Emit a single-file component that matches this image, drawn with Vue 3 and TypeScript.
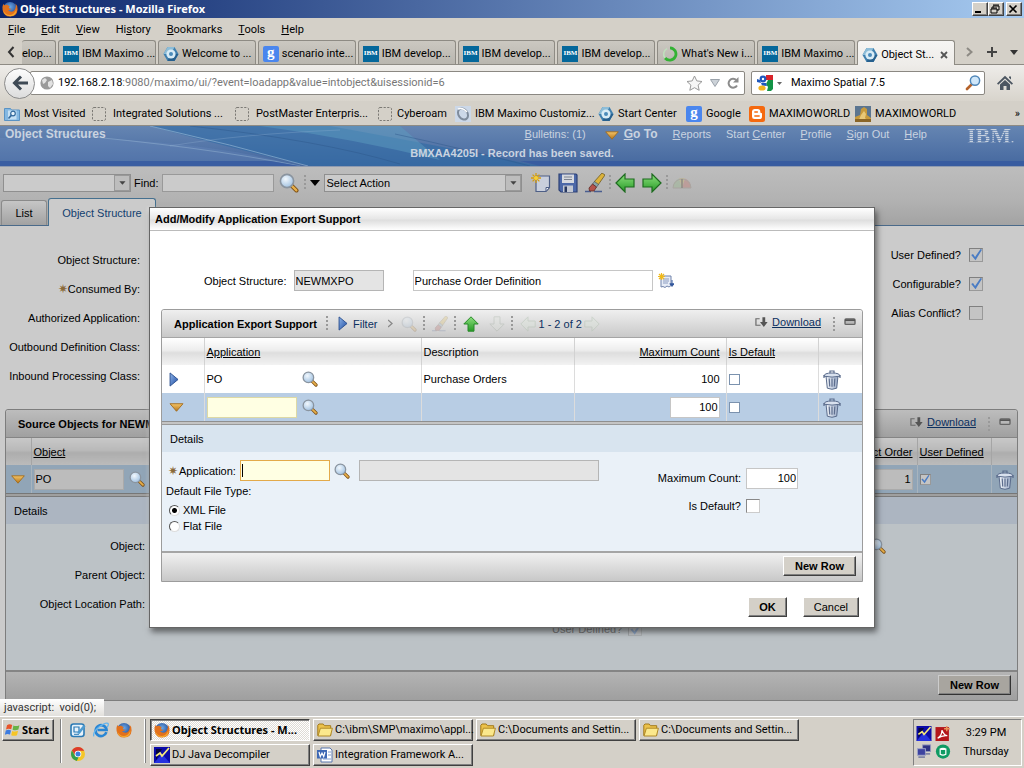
<script setup lang="ts">
import { ref } from 'vue'

interface Tab { icon: string; text: string }
interface Mark { icon: string; text: string }
interface Task { icon: string; text: string; active?: boolean }
interface Row { id: number; app: string; desc: string; open: boolean }

const menus = ['File', 'Edit', 'View', 'History', 'Bookmarks', 'Tools', 'Help']
const menuKey: Record<string, number> = { History: 2 }
const glyphs: Record<string, string> = { ibm: 'IBM', goog: 'g' }

const tabs: Tab[] = [
  { icon: 'ibm', text: 'IBM Maximo ...' },
  { icon: 'hex', text: 'Welcome to ...' },
  { icon: 'goog', text: 'scenario inte...' },
  { icon: 'ibm', text: 'IBM develop...' },
  { icon: 'ibm', text: 'IBM develop...' },
  { icon: 'ibm', text: 'IBM develop...' },
  { icon: 'ring', text: "What's New i..." },
  { icon: 'ibm', text: 'IBM Maximo ...' },
]

const marks: Mark[] = [
  { icon: 'visited', text: 'Most Visited' },
  { icon: 'blank', text: 'Integrated Solutions ...' },
  { icon: 'blank', text: 'PostMaster Enterpris...' },
  { icon: 'blank', text: 'Cyberoam' },
  { icon: 'swirl', text: 'IBM Maximo Customiz...' },
  { icon: 'hex', text: 'Start Center' },
  { icon: 'goog', text: 'Google' },
  { icon: 'blogger', text: 'MAXIMOWORLD' },
  { icon: 'sphinx', text: 'MAXIMOWORLD' },
]

const tasks: Task[] = [
  { icon: 'firefox', text: 'Object Structures - M...', active: true },
  { icon: 'folder', text: 'C:\\ibm\\SMP\\maximo\\appl...' },
  { icon: 'folder', text: 'C:\\Documents and Settin...' },
  { icon: 'folder', text: 'C:\\Documents and Settin...' },
  { icon: 'dj', text: 'DJ Java Decompiler' },
  { icon: 'word', text: 'Integration Framework A...' },
]

const formLabels = ['Object Structure:', 'Consumed By:', 'Authorized Application:', 'Outbound Definition Class:', 'Inbound Processing Class:']
const flags = [
  { text: 'User Defined?', on: true },
  { text: 'Configurable?', on: true },
  { text: 'Alias Conflict?', on: false },
]

const rows: Row[] = [
  { id: 1, app: 'PO', desc: 'Purchase Orders', open: false },
  { id: 2, app: '', desc: '', open: true },
]

const query = ref('Maximo Spatial 7.5')
const fileType = ref('xml')
</script>

<template>
  <div class="screen">
    <svg class="defs" width="0" height="0" aria-hidden="true">
      <defs>
        <linearGradient id="gBlue" x1="0" y1="0" x2="1" y2="1"><stop offset="0" stop-color="#8fb6ea" /><stop offset="1" stop-color="#1c4aa0" /></linearGradient>
        <linearGradient id="gGold" x1="0" y1="0" x2="0" y2="1"><stop offset="0" stop-color="#f5c568" /><stop offset="1" stop-color="#b4741a" /></linearGradient>
        <linearGradient id="gGreen" x1="0" y1="0" x2="0" y2="1"><stop offset="0" stop-color="#8ee07e" /><stop offset="1" stop-color="#259a25" /></linearGradient>
        <linearGradient id="gBin" x1="0" y1="0" x2="1" y2="0"><stop offset="0" stop-color="#f4f7fb" /><stop offset="1" stop-color="#9aaac6" /></linearGradient>
        <radialGradient id="gFox" cx="0.5" cy="0.35" r="0.65"><stop offset="0" stop-color="#6aa7e6" /><stop offset="1" stop-color="#163a86" /></radialGradient>
        <radialGradient id="gLens" cx="0.4" cy="0.35" r="0.7"><stop offset="0" stop-color="#f2f8fd" /><stop offset="1" stop-color="#9dbfe0" /></radialGradient>
      </defs>
      <symbol id="firefox" viewBox="0 0 16 16">
        <circle cx="8" cy="8" r="7" fill="url(#gFox)" />
        <path d="M1.2 3 Q0 6 .6 9 Q1.8 15.6 8.2 15.6 Q15 15.2 15.6 8.4 Q15.8 4.6 13.4 2.6 Q14.6 5.4 13.2 7.8 Q12 11.2 8.4 10.6 Q6.4 10.4 6.2 9 Q8 9.4 9.4 7.8 Q7.2 8 6.6 6.6 Q7.6 6 7.6 5 Q6 4.8 5.2 3.8 Q3 3.4 2.6 4.4Z" fill="#e2711d" />
        <path d="M1.2 9 Q3 14 8 14 Q13 13.6 14.4 8 Q15 15 8.2 15.3 Q2 15 1.2 9Z" fill="#f6a92c" />
      </symbol>
      <symbol id="hex" viewBox="0 0 16 16">
        <path d="M4.5 1h7L15.5 8l-4 7h-7L.5 8Z" fill="#3f7fae" />
        <path d="M4.5 1h7L8 8 .5 8Z" fill="#8dbdd8" />
        <path d="M4.5 15h7L15.5 8 8 8Z" fill="#27608e" />
        <circle cx="8" cy="8" r="4.6" fill="#d9ecf6" /><circle cx="8" cy="8" r="2" fill="#4c8cba" />
      </symbol>
      <symbol id="ring" viewBox="0 0 16 16">
        <path d="M8 1.8A6.2 6.2 0 1 1 3 12" fill="none" stroke="#33b234" stroke-width="2.8" />
        <path d="M3 12A6.2 6.2 0 0 1 5 2.6" fill="none" stroke="#bfe0bd" stroke-width="1.6" />
      </symbol>
      <symbol id="visited" viewBox="0 0 16 16">
        <path d="M.5 2.5h6l1 1.5h8v10.5H.5Z" fill="#84b8e2" stroke="#5a93c4" />
        <rect x="4" y="4.5" width="8.5" height="9" fill="#c5e0f4" />
        <circle cx="9" cy="7.5" r="2.3" fill="#e8f4fc" stroke="#33699c" stroke-width="1.2" /><path d="M7.3 9.4 4.5 12.5" stroke="#33699c" stroke-width="1.6" />
      </symbol>
      <symbol id="blank" viewBox="0 0 16 16">
        <rect x="1.5" y="1.5" width="13" height="13" rx="1.5" fill="none" stroke="#7c7a75" stroke-dasharray="2.2 1.4" />
      </symbol>
      <symbol id="swirl" viewBox="0 0 16 16">
        <rect width="16" height="16" fill="#ccd8e8" />
        <ellipse cx="8" cy="8" rx="4.5" ry="6" fill="none" stroke="#7f8c9c" stroke-width="2" transform="rotate(-35 8 8)" />
        <path d="M3 3Q8 1 12 6" stroke="#fff" stroke-width="1.4" fill="none" />
      </symbol>
      <symbol id="blogger" viewBox="0 0 16 16">
        <rect width="16" height="16" rx="2.5" fill="#f5690f" />
        <path d="M5.5 3h3.2A2.6 2.6 0 0 1 11.3 5.6V6.6Q11.5 7 12.3 7T13 7.8V10.4A2.6 2.6 0 0 1 10.4 13H5.5A2.6 2.6 0 0 1 3 10.4V5.6A2.6 2.6 0 0 1 5.5 3Z" fill="#fff" />
        <path d="M5.8 6h2.6M5.8 10h4.4" stroke="#f5690f" stroke-width="1.3" stroke-linecap="round" />
      </symbol>
      <symbol id="sphinx" viewBox="0 0 16 16">
        <rect width="16" height="16" fill="#5b7590" /><path d="M0 16V11l5-2 1-6 3-2 3 2v6l4 3v4Z" fill="#c79a3c" /><path d="M6 9l3-4 2 3-1 4 4 4H3Z" fill="#e8c878" /><path d="M0 13h16v3H0Z" fill="#8a6527" />
      </symbol>
      <symbol id="gsearch" viewBox="0 0 16 16">
        <rect width="16" height="16" fill="#fff" />
        <path d="M9 0h7v5H9Z" fill="#d8232a" /><path d="M9 5h7v9l-2 2H9Z" fill="#139346" />
        <path d="M8 5h3L9 9l2 3-1 4H7Z" fill="#fff" />
        <circle cx="6" cy="4" r="3.4" fill="#1f58bd" /><circle cx="6" cy="4" r="1.2" fill="#fff" />
        <path d="M0 4l3 1 1 3-4-1ZM4 8h5l1 3-5-.5Z" fill="#1f58bd" /><ellipse cx="5" cy="13" rx="3.6" ry="2.6" fill="#f3b51f" />
      </symbol>
      <symbol id="lens" viewBox="0 0 20 20">
        <path d="M12 12l5.5 5.5" stroke="#7c4f16" stroke-width="4" stroke-linecap="round" /><path d="M12.6 12.6l4.8 4.8" stroke="#e8b04a" stroke-width="2.2" stroke-linecap="round" />
        <circle cx="8" cy="8" r="6.6" fill="url(#gLens)" stroke="#8a949f" stroke-width="1.6" />
      </symbol>
      <symbol id="binoc" viewBox="0 0 20 20">
        <path d="M8 12 2.5 17.5" stroke="#b5622a" stroke-width="3.4" stroke-linecap="round" />
        <circle cx="12.5" cy="7" r="5.8" fill="#cfe7fa" stroke="#4f86b8" stroke-width="1.8" />
      </symbol>
      <symbol id="down" viewBox="0 0 16 10"><path d="M.8.8h14.4L8 9.2Z" fill="url(#gGold)" stroke="#a16a1b" /></symbol>
      <symbol id="play" viewBox="0 0 10 16"><path d="M.8 1v14L9.3 8Z" fill="url(#gBlue)" stroke="#2a4f8f" /></symbol>
      <symbol id="arrow" viewBox="0 0 20 20"><path d="M1 10 10 1v5h9v8h-9v5Z" fill="url(#gGreen)" stroke="#1d6b1f" stroke-width="1.2" /></symbol>
      <symbol id="arrowUp" viewBox="0 0 16 16"><path d="M8 .8 15.2 8H11v7.2H5V8H.8Z" fill="url(#gGreen)" stroke="#2a8a2c" /></symbol>
      <symbol id="arrowDown" viewBox="0 0 16 16"><path d="M8 15.2.8 8H5V.8h6V8h4.2Z" fill="#dfe6dd" stroke="#7f907d" /></symbol>
      <symbol id="arrowPale" viewBox="0 0 16 16"><path d="M.8 8 8 .8V5h7.2v6H8v4.2Z" fill="#dbe4da" stroke="#a9bba8" /></symbol>
      <symbol id="newDoc" viewBox="0 0 20 20">
        <path d="M5 3h13.5v11.5L15 18.5H5Z" fill="#c9cfdc" stroke="#4e5f86" stroke-width="1.2" /><path d="M18.5 14.5H15v4Z" fill="#f3f5fa" stroke="#4e5f86" />
        <path d="M5 0v10M0 5h10M1.6 1.6l6.8 6.8M8.4 1.6 1.6 8.4" stroke="#d69c10" stroke-width="1.3" /><circle cx="5" cy="5" r="2" fill="#f4cf3a" />
      </symbol>
      <symbol id="save" viewBox="0 0 20 20">
        <path d="M1 1h17l1 1v17H3L1 17Z" fill="#4c68a8" stroke="#2d4176" stroke-width="1.2" /><path d="M4 1.5h12V10H4Z" fill="#d6d9df" /><path d="M6 4h8M6 6.5h8" stroke="#7b8290" />
        <path d="M5 12.5h10V19H5Z" fill="#c3c8d2" /><path d="M6.5 13.5H9V19H6.5Z" fill="#27375f" />
      </symbol>
      <symbol id="eraser" viewBox="0 0 20 20">
        <path d="M0 18.5h6M9 18.5h8" stroke="#4a5e90" stroke-width="1.4" /><path d="M17 0l3 2-7 10-4-3Z" fill="#dcb33b" stroke="#6f5a22" stroke-width=".8" /><path d="M9.5 8.5l4 3-2 2.6-4-3Z" fill="#8ba3a8" stroke="#4d5a5c" stroke-width=".7" />
        <path d="M7.500 11l4 3-2.500 4H4.500L4 15Z" fill="#b5524a" stroke="#5e2b27" stroke-width=".8" />
      </symbol>
      <symbol id="gauge" viewBox="0 0 20 14">
        <path d="M1 12A9 9 0 0 1 7 2.5L10 12Z" fill="#a3b89c" /><path d="M7 2.5A9 9 0 0 1 13 2.5L10 12Z" fill="#c4b77f" /><path d="M13 2.5A9 9 0 0 1 19 12h-9Z" fill="#c08d87" /><path d="M1 12A9 9 0 0 1 19 12Z" fill="none" stroke="#a09a92" /><path d="M10 12V3" stroke="#6d6760" stroke-width="1.4" />
      </symbol>
      <symbol id="bin" viewBox="0 0 18 20">
        <path d="M3 6h12l-1.3 12.2Q9 20.4 4.3 18.2Z" fill="url(#gBin)" stroke="#5b6c8c" /><path d="M6.2 8.5l.5 8M9 8.5v8.3M11.8 8.5l-.5 8" stroke="#5d6d8d" stroke-width="1.2" />
        <path d="M1 6.2Q1 3 9 3t8 3.2Q9 8 1 6.2Z" fill="#d9e1ee" stroke="#5b6c8c" /><path d="M7 3V1h4v2M1 5v3M17 5v3" stroke="#5b6c8c" stroke-width="1.2" fill="none" />
      </symbol>
      <symbol id="dl" viewBox="0 0 14 12">
        <path d="M5 2.5H1v7h5M1 2.5V9.5" fill="none" stroke="#6a6a6a" stroke-width="1.3" /><path d="M8 1h3v5h2.600L9.500 11.400 5.400 6H8Z" fill="#555" />
      </symbol>
      <symbol id="mini" viewBox="0 0 12 8"><rect x="1" y="1" width="10" height="5.4" rx="1" fill="#b8b8b8" stroke="#666" stroke-width="1.4" /><path d="M1 2.2h10" stroke="#555" stroke-width="1.6" /></symbol>
      <symbol id="longDesc" viewBox="0 0 16 16">
        <path d="M3 3h10v9.5L11 14l-2-1-2 1.5-2-1-2 .5Z" fill="#e7ecf6" stroke="#7183ab" /><path d="M5 6h6M5 8h6M5 10h5" stroke="#8b9cc0" /><path d="M14 7v5M11.800 10.800 14 13.400l2-2.600Z" fill="#35599d" stroke="#35599d" />
        <path d="M3.5 0v7M0 3.5h7M1 1l5 5M6 1 1 6" stroke="#f0b91c" stroke-width="1.2" />
      </symbol>
      <symbol id="folder" viewBox="0 0 16 14"><path d="M.8 12.5V2.2L2 1h4.2l1.3 1.7h6.2v9.8Z" fill="#ecc24a" stroke="#a37a1a" /><path d="M1 13 3.4 5.2h12L13.4 13Z" fill="#fbe88c" stroke="#b08a28" /></symbol>
      <symbol id="dj" viewBox="0 0 16 16"><rect width="16" height="16" fill="#0b0ba8" /><path d="M0 16 8 7l8 9Z" fill="#2531e0" /><path d="M2 2h6L2 13Z" fill="#050540" /><path d="M2 9l4-3 2 3 7-8" fill="none" stroke="#f6e97a" stroke-width="1.8" /></symbol>
      <symbol id="word" viewBox="0 0 16 16"><path d="M4 1h9l2 2v12H4Z" fill="#fff" stroke="#5877ad" /><path d="M11 5h3M11 8h3M6 12h8" stroke="#7e9bd0" /><rect y="3" width="10" height="8.5" fill="#3d68b4" /><path d="M2 5l1.3 4.5L5 6l1.7 3.5L8 5" fill="none" stroke="#fff" stroke-width="1.2" /></symbol>
      <symbol id="desk" viewBox="0 0 16 16"><rect x="1" y="2" width="13" height="12.5" rx="2.5" fill="#e8f3fb" stroke="#2b7ab5" stroke-width="1.6" /><path d="M4 5h5v5H4Z" fill="none" stroke="#2b7ab5" stroke-width="1.2" /><path d="M7 11l6.5-8 2 1.5L9.5 12Z" fill="#4d9bd0" /><path d="M4 12.3h5" stroke="#2b7ab5" /></symbol>
      <symbol id="ie" viewBox="0 0 16 16"><path d="M13.4 10.2A5.5 5.5 0 1 1 13.6 8H4.5" fill="none" stroke="#2a86d4" stroke-width="2.6" /><path d="M.8 14.4Q-.4 10 6 5T15 1.4Q16 3 14 5.4" fill="none" stroke="#65b5ee" stroke-width="1.3" /></symbol>
      <symbol id="chrome" viewBox="0 0 16 16"><circle cx="8" cy="8" r="7" fill="#f4c62a" /><path d="M8 1A7 7 0 0 1 14.2 4.8H8L5 9 1.9 4.6A7 7 0 0 1 8 1Z" fill="#dc3b2c" /><path d="M1.9 4.6 5.2 10 8.6 11.2 6.8 14.9A7 7 0 0 1 1.9 4.6Z" fill="#35a04a" /><circle cx="8" cy="8" r="3.3" fill="#fff" /><circle cx="8" cy="8" r="2.5" fill="#3d7fdc" /></symbol>
      <symbol id="win" viewBox="0 0 16 16"><path d="M2 3.2Q4.4 1.6 7.2 3L6.2 7.2Q3.6 6 1 7.4Z" fill="#e8542a" /><path d="M8.4 3.5Q11 4.8 14.4 3.2L13.4 7.6Q10.6 9 7.6 7.7Z" fill="#67b346" /><path d="M.8 8.6Q3.2 7.2 6 8.4L5 12.6Q2.4 11.4-.2 12.8Z" fill="#3d7ce0" /><path d="M7.2 9Q10 10.2 13 8.8L12 13.2Q9 14.4 6.2 13.2Z" fill="#f6c526" /></symbol>
      <symbol id="pdf" viewBox="0 0 14 14"><rect y="1" width="12.5" height="13" fill="#b3161b" /><path d="M2 11.5Q6 9 6 4q2 5 5 5-5-.5-9 2.5Z" fill="none" stroke="#fff" stroke-width="1.2" /><path d="M10.5 0v5M8 2.5h5.5" stroke="#e9965c" stroke-width="1.4" /></symbol>
      <symbol id="net" viewBox="0 0 16 16"><rect x="6.5" y="1" width="8.5" height="7" fill="#2f3484" stroke="#9298bd" /><rect x="1" y="5" width="8.5" height="7" fill="#3d43a0" stroke="#a1a6c8" /><path d="M2 14h7M9.5 10.5h5" stroke="#8085a5" stroke-width="2" /></symbol>
      <symbol id="db" viewBox="0 0 16 16"><circle cx="8" cy="8" r="7.6" fill="#0f9a63" /><path d="M5 5.4h6V11q-3 1.8-6 0Z" fill="none" stroke="#fff" stroke-width="1.3" /><ellipse cx="8" cy="5.2" rx="3" ry="1.2" fill="#fff" /></symbol>
    </svg>

    <header class="titlebar">
      <svg class="i16"><use href="#firefox" /></svg>
      <h1>Object Structures - Mozilla Firefox</h1>
      <button class="wb" aria-label="Minimize"><svg viewBox="0 0 12 10"><path d="M2 8h6" stroke="#000" stroke-width="2" /></svg></button>
      <button class="wb" aria-label="Restore"><svg viewBox="0 0 12 10"><path d="M4 1h6M4 2h6v4H8M4 2v2M2 4h6M2 5h6v4H2Z" fill="none" stroke="#000" /></svg></button>
      <button class="wb close" aria-label="Close"><svg viewBox="0 0 12 10"><path d="M2.500 1.500l7 7M9.500 1.500l-7 7" stroke="#000" stroke-width="1.700" /></svg></button>
    </header>

    <nav class="menubar">
      <a v-for="m in menus" :key="m" href="#">{{ m.slice(0, menuKey[m] ?? 0) }}<u>{{ m.charAt(menuKey[m] ?? 0) }}</u>{{ m.slice((menuKey[m] ?? 0) + 1) }}</a>
    </nav>

    <div class="tabstrip">
      <button class="scroll" aria-label="Scroll tabs left"><svg width="8" height="12" viewBox="0 0 8 12"><path d="M6.500 1 2 6l4.500 5" fill="none" stroke="#333" stroke-width="2" /></svg></button>
      <div class="tabs">
        <button class="tab cut">elop...</button>
        <button v-for="(t, i) in tabs" :key="i" class="tab"><span v-if="glyphs[t.icon]" class="glyph" :class="t.icon">{{ glyphs[t.icon] }}</span><svg v-else class="i16"><use :href="'#' + t.icon" /></svg><span>{{ t.text }}</span></button>
        <button class="tab on"><svg class="i16"><use href="#hex" /></svg><span>Object St...</span><svg class="x" width="8" height="8" viewBox="0 0 8 8"><path d="M1 1l6 6M7 1 1 7" stroke="#555" stroke-width="1.800" /></svg></button>
      </div>
      <div class="tabtools">
        <button aria-label="Scroll tabs right"><svg width="7" height="10" viewBox="0 0 7 10"><path d="M1 1l4.500 4L1 9" fill="none" stroke="#8d8a84" stroke-width="2" /></svg></button>
        <button aria-label="New tab"><svg width="10" height="10" viewBox="0 0 10 10"><path d="M5 0v10M0 5h10" stroke="#444" stroke-width="2" /></svg></button>
        <button aria-label="List tabs"><svg width="8" height="5" viewBox="0 0 8 5"><path d="M0 0h8L4 5Z" fill="#333" /></svg></button>
      </div>
    </div>

    <div class="navbar">
      <button class="back" aria-label="Back"><svg width="16" height="16" viewBox="0 0 16 16"><path d="M9 1.500 2.500 8 9 14.500M3 8h13" fill="none" stroke="#3f4a55" stroke-width="3" /></svg></button>
      <div class="url">
        <svg width="14" height="14" viewBox="0 0 14 14"><circle cx="7" cy="7" r="6.600" fill="#9a9a9a" /><path d="M2 4l3-2 2 2-2 3-2 1ZM8 6l4-2 1 4-3 4-2-2Z" fill="#e2e2e2" /></svg>
        <span class="addr"><b>192.168.2.18</b>:9080/maximo/ui/?event=loadapp&amp;value=intobject&amp;uisessionid=6</span>
        <svg width="17" height="16" viewBox="0 0 17 16"><path d="M8.500 1l2.300 4.900 5.200.6-3.900 3.600 1.100 5.200-4.700-2.600-4.700 2.600 1.100-5.200L1 6.500l5.200-.6Z" fill="#f6f6f6" stroke="#999" /></svg>
        <svg width="10" height="8" viewBox="0 0 10 8"><path d="M.5.500h9L5 7.500Z" fill="#ccd2d8" stroke="#9aa2aa" /></svg>
        <svg width="12" height="12" viewBox="0 0 12 12"><path d="M10 8.500A4.500 4.500 0 1 1 9.300 3" fill="none" stroke="#8c8c8c" stroke-width="2" /><path d="M11.500 0v5.500H6Z" fill="#8c8c8c" /></svg>
      </div>
      <div class="search">
        <svg class="i16"><use href="#gsearch" /></svg>
        <svg width="5" height="3" viewBox="0 0 5 3"><path d="M0 0h5L2.500 3Z" fill="#666" /></svg>
        <input v-model="query" aria-label="Search">
        <svg class="i16"><use href="#binoc" /></svg>
      </div>
      <button class="home" aria-label="Home"><svg width="16" height="16" viewBox="0 0 16 16"><path d="M8 .8 16 8.500l-1.200 1.300L8 3.600 1.200 9.800 0 8.500ZM12 1.500h2v3l-2-1.800Z" fill="#4c5661" /><path d="M3 9.500 8 5l5 4.500V15H9.500v-4h-3v4H3Z" fill="#4c5661" /></svg></button>
    </div>

    <nav class="bookmarks">
      <a v-for="(m, i) in marks" :key="i" href="#"><span v-if="glyphs[m.icon]" class="glyph" :class="m.icon">{{ glyphs[m.icon] }}</span><svg v-else class="i16"><use :href="'#' + m.icon" /></svg><span>{{ m.text }}</span></a>
      <button aria-label="More bookmarks">»</button>
    </nav>

    <main class="app">
      <header class="banner">
        <svg class="swoosh" viewBox="0 0 1024 40" preserveAspectRatio="none" aria-hidden="true">
          <path d="M150 0Q230 22 310 40H540Q440 20 330 0Z" fill="#2f6aa5" opacity=".6" />
          <path d="M260 0Q350 12 440 34L400 0Z" fill="#5c9cc0" opacity=".5" />
          <path d="M0 12Q180 8 300 40H0Z" fill="#6f8fc4" opacity=".25" />
          <path d="M150 0Q230 18 308 40" fill="none" stroke="#a4c3dd" opacity=".55" /><path d="M60 8Q200 20 300 40" fill="none" stroke="#a4c3dd" opacity=".4" />
          <path d="M190 0Q320 14 400 38M395 8Q460 22 530 40" fill="none" stroke="#2c5689" opacity=".45" /><path d="M170 20Q240 8 340 4" fill="none" stroke="#94b4d4" opacity=".3" />
          <path d="M0 35h270l30 5H0ZM520 35h504v5H540Z" fill="#3559a0" opacity=".8" />
        </svg>
        <div class="brow">
          <h2>Object Structures</h2>
          <a href="#"><u>B</u>ulletins: (1)</a>
          <a href="#" class="goto"><svg width="14" height="9"><use href="#down" /></svg><b><u>G</u>o To</b></a>
          <a href="#"><u>R</u>eports</a>
          <a href="#">Start <u>C</u>enter</a>
          <a href="#"><u>P</u>rofile</a>
          <a href="#"><u>S</u>ign Out</a>
          <a href="#"><u>H</u>elp</a>
          <span class="logo">IBM<i>.</i></span>
        </div>
        <p class="msg">BMXAA4205I - Record has been saved.</p>
      </header>

      <div class="tools">
        <span class="sel s1"><select aria-label="Saved queries"><option></option></select><svg viewBox="0 0 16 16"><path d="M5 6h7L8.500 10Z" fill="#444" /></svg></span>
        <label for="find">Find:</label>
        <input id="find">
        <button aria-label="Search" class="lg"><svg><use href="#lens" /></svg></button>
        <i class="dots"></i>
        <svg class="caret" width="10" height="6" viewBox="0 0 10 6"><path d="M0 0h10L5 6Z" fill="#000" /></svg>
        <span class="sel s2"><select aria-label="Select Action"><option>Select Action</option></select><svg viewBox="0 0 16 16"><path d="M5 6h7L8.500 10Z" fill="#444" /></svg></span>
        <div class="actions">
          <button aria-label="New"><svg><use href="#newDoc" /></svg></button>
          <button aria-label="Save"><svg><use href="#save" /></svg></button>
          <button aria-label="Clear"><svg><use href="#eraser" /></svg></button>
          <i class="dots"></i>
          <button aria-label="Previous"><svg><use href="#arrow" /></svg></button>
          <button aria-label="Next" class="flip"><svg><use href="#arrow" /></svg></button>
          <i class="dots"></i>
          <button aria-label="KPI" class="faded"><svg><use href="#gauge" /></svg></button>
        </div>
      </div>

      <div class="apptabs">
        <button>List</button>
        <button class="cur">Object Structure</button>
      </div>

      <section class="form">
        <ul><li v-for="l in formLabels" :key="l"><i v-if="l === 'Consumed By:'" class="req">✷</i>{{ l }}</li></ul>
        <div class="flags"><label v-for="f in flags" :key="f.text">{{ f.text }}<input type="checkbox" class="big" :checked="f.on"></label></div>
      </section>

      <section class="panel under">
        <div class="phead"><h3>Source Objects for NEWMXPO</h3><div class="pend"><svg width="13" height="12"><use href="#dl" /></svg><a href="#">Download</a><i class="dots"></i><svg width="12" height="8"><use href="#mini" /></svg></div></div>
        <table>
          <colgroup><col class="u1"><col><col class="u3"><col class="u4"><col class="u5"></colgroup>
          <thead><tr><th></th><th><a href="#">Object</a></th><th class="num"><a href="#">Object Order</a></th><th><a href="#">User Defined</a></th><th></th></tr></thead>
          <tbody><tr class="open">
            <td class="exp"><svg width="14" height="9"><use href="#down" /></svg></td>
            <td><div class="cell"><input aria-label="Object" class="w90" value="PO"><svg class="i16"><use href="#lens" /></svg></div></td>
            <td class="num"><input aria-label="Object Order" class="w50" value="1"></td>
            <td><input type="checkbox" aria-label="User Defined" checked></td>
            <td><button class="bin" aria-label="Delete"><svg width="18" height="20"><use href="#bin" /></svg></button></td>
          </tr></tbody>
        </table>
        <h4>Details</h4>
        <div class="ubody">
          <ul><li>Object:</li><li>Parent Object:</li><li>Object Location Path:</li></ul>
          <label class="umid">User Defined?<input type="checkbox" class="big" checked></label>
          <svg class="i16 ulens"><use href="#lens" /></svg>
        </div>
        <div class="pfoot"><button class="btn strong">New Row</button></div>
      </section>

      <section class="dialog" role="dialog" aria-label="Add/Modify Application Export Support">
        <h2>Add/Modify Application Export Support</h2>
        <div class="top">
          <label for="os">Object Structure:</label><input id="os" class="ro w90" value="NEWMXPO" readonly>
          <input class="desc" aria-label="Description" value="Purchase Order Definition">
          <button aria-label="Long description"><svg class="i16"><use href="#longDesc" /></svg></button>
        </div>

        <div class="panel">
          <div class="phead">
            <h3>Application Export Support</h3>
            <i class="dots"></i>
            <a href="#" class="filter"><svg width="10" height="15"><use href="#play" /></svg>Filter</a>
            <svg width="5" height="9" viewBox="0 0 5 9"><path d="M0 1l4 3.500L0 8" fill="none" stroke="#888" stroke-width="1.300" /></svg>
            <svg class="i16 dim"><use href="#lens" /></svg>
            <i class="dots"></i>
            <svg class="i16 dim"><use href="#eraser" /></svg>
            <i class="dots"></i>
            <button aria-label="Previous row"><svg class="i16"><use href="#arrowUp" /></svg></button>
            <svg class="i16 dim dn"><use href="#arrowDown" /></svg>
            <i class="dots"></i>
            <span class="pager"><svg class="i16 dim"><use href="#arrowPale" /></svg>1 - 2 of 2<svg class="i16 dim flip"><use href="#arrowPale" /></svg></span>
            <div class="pend"><svg width="13" height="12"><use href="#dl" /></svg><a href="#">Download</a><i class="dots"></i><svg width="12" height="8"><use href="#mini" /></svg></div>
          </div>
          <table>
            <colgroup><col class="c1"><col class="c2"><col><col class="c4"><col class="c5"><col class="c6"></colgroup>
            <thead><tr><th></th><th><a href="#">Application</a></th><th>Description</th><th class="num"><a href="#">Maximum Count</a></th><th><a href="#">Is Default</a></th><th></th></tr></thead>
            <tbody>
              <tr v-for="r in rows" :key="r.id" :class="{ open: r.open }">
                <td class="exp"><svg v-if="r.open" width="15" height="9"><use href="#down" /></svg><svg v-else width="10" height="15"><use href="#play" /></svg></td>
                <td><div class="cell"><input v-if="r.open" aria-label="Application" class="w90 need"><span v-else class="w90">{{ r.app }}</span><svg class="i16"><use href="#lens" /></svg></div></td>
                <td>{{ r.desc }}</td>
                <td class="num"><input v-if="r.open" aria-label="Maximum Count" class="w50" value="100"><template v-else>100</template></td>
                <td><input type="checkbox" :aria-label="'Is Default, row ' + r.id"></td>
                <td><button class="bin" aria-label="Delete row"><svg width="18" height="20"><use href="#bin" /></svg></button></td>
              </tr>
            </tbody>
          </table>
          <h4>Details</h4>
          <div class="dbody">
            <div class="left">
              <div class="line"><i class="req">✷</i><label for="ap">Application:</label><span class="focus"><input id="ap" class="w90 need"></span><svg class="i16"><use href="#lens" /></svg><input class="ro wide" aria-label="Application description" readonly></div>
              <fieldset>
                <legend>Default File Type:</legend>
                <label><input v-model="fileType" type="radio" value="xml">XML File</label>
                <label><input v-model="fileType" type="radio" value="flat">Flat File</label>
              </fieldset>
            </div>
            <div class="right">
              <label for="mc">Maximum Count:</label><input id="mc" class="w52" value="100">
              <label for="df">Is Default?</label><input id="df" type="checkbox" class="big">
            </div>
          </div>
          <div class="pfoot"><button class="btn strong">New Row</button></div>
        </div>
        <div class="ends"><button class="btn strong">OK</button><button class="btn">Cancel</button></div>
      </section>

      <div class="status">javascript:&nbsp; void(0);</div>
    </main>

    <footer class="taskbar">
      <button class="start"><svg class="i16"><use href="#win" /></svg>Start</button>
      <div class="quick">
        <button aria-label="Show desktop"><svg class="i16"><use href="#desk" /></svg></button>
        <button aria-label="Internet Explorer"><svg class="i16"><use href="#ie" /></svg></button>
        <button aria-label="Firefox"><svg class="i16"><use href="#firefox" /></svg></button>
        <button aria-label="Chrome"><svg class="i16"><use href="#chrome" /></svg></button>
      </div>
      <div class="tasks">
        <button v-for="(t, i) in tasks" :key="i" :class="{ active: t.active }"><svg class="i16"><use :href="'#' + t.icon" /></svg><span>{{ t.text }}</span></button>
      </div>
      <div class="tray">
        <div class="icons"><svg><use href="#dj" /></svg><svg><use href="#pdf" /></svg><svg><use href="#net" /></svg><svg><use href="#db" /></svg></div>
        <div class="clock"><span>3:29 PM</span><span>Thursday</span></div>
      </div>
    </footer>
  </div>
</template>

<style>
body { margin: 0; background: #d4d0c8; }
</style>

<style scoped>
* { box-sizing: border-box; }
.screen { min-height: 100vh; display: flex; flex-direction: column; background: #d4d0c8; color: #000; font: 11px/14px Tahoma, Roboto, sans-serif; white-space: nowrap; overflow: hidden; }
h1, h2, h3, h4, p, ul { margin: 0; padding: 0; font-size: inherit; }
ul { list-style: none; }
i { font-style: normal; }
a { color: inherit; text-decoration: none; }
button, input, select { font: inherit; color: inherit; margin: 0; border-radius: 0; }
button { padding: 0; border: 0; background: none; }
input { outline: 0; }
svg { flex: none; display: block; }
.defs { position: absolute; }
.i16 { width: 16px; height: 16px; }
.glyph { flex: none; width: 16px; height: 16px; text-align: center; color: #fff; font-family: "Liberation Serif", serif; font-weight: bold; }
.glyph.ibm { background: #04679b; font-size: 7px; line-height: 15px; }
.glyph.goog { background: #4a86ee; border-radius: 2px; font-size: 15px; line-height: 12px; }

.titlebar { height: 18px; display: flex; align-items: center; padding: 0 2px; background: linear-gradient(90deg, #0a246a, #a6caf0); color: #fff; }
.titlebar h1 { flex: 1; margin-left: 2px; font-family: Tahoma, "Noto Sans", sans-serif; font-weight: bold; }
.wb { width: 16px; height: 14px; background: #d4d0c8; border: 1px solid; border-color: #fff #404040 #404040 #fff; box-shadow: inset -1px -1px #808080; }
.wb svg { width: 12px; height: 10px; }
.wb.close { margin-left: 2px; }

.menubar { height: 22px; display: flex; align-items: center; gap: 16px; padding: 2px 0 0 8px; }

.tabstrip { height: 25px; display: flex; border-bottom: 1px solid #8e8b84; }
.scroll { width: 22px; display: grid; place-items: center; }
.tabs { flex: 1; display: flex; min-width: 0; }
.tab { flex: 1 1 0; min-width: 0; height: 24px; margin-right: 2px; padding: 3px 3px 0 4px; display: flex; align-items: center; gap: 3px; overflow: hidden; background: linear-gradient(#cbc8c1, #b9b6af); border: 1px solid #8e8b84; border-bottom: 0; border-radius: 3px 3px 0 0; }
.tab.cut { flex: none; width: 34px; padding: 3px 0 0; border-left: 0; }
.tab.on { height: 25px; background: linear-gradient(#f6f5f3, #eeece9); }
.tab .x { margin-left: auto; margin-right: 3px; }
.tabtools { width: 67px; display: flex; align-items: center; justify-content: space-between; padding: 0 6px 0 9px; }

.navbar { height: 36px; display: flex; align-items: center; padding: 0 11px 0 4px; background: linear-gradient(#eeece9, #d8d4cc); }
.back { position: relative; z-index: 1; width: 31px; height: 31px; border-radius: 50%; border: 1px solid #8b8b8b; background: linear-gradient(#fdfdfd, #dcdcdc); display: grid; place-items: center; }
.url { flex: 1; height: 24px; margin-left: -5px; padding: 0 5px 0 9px; display: flex; align-items: center; gap: 7px; background: #fff; border: 1px solid #8b8882; border-radius: 2px; }
.addr { flex: 1; margin-left: -3px; color: #777; }
.addr b { color: #000; font-weight: normal; }
.search { width: 234px; height: 24px; margin: 0 12px 0 6px; padding: 0 3px 0 5px; display: flex; align-items: center; gap: 4px; background: #fff; border: 1px solid #8b8882; border-radius: 2px; }
.search input { flex: 1; min-width: 0; border: 0; padding: 0 5px; background: none; }

.bookmarks { height: 25px; display: grid; grid-template-columns: 87px 143px 143px 78px 143px 88px 63px 106px 1fr auto; align-items: center; padding: 2px 4px 0; border-bottom: 1px solid #8e8b84; }
.bookmarks a { display: flex; align-items: center; gap: 4px; }
.bookmarks a:nth-child(2), .bookmarks a:nth-child(3) { gap: 6px; }

.app { flex: 1; position: relative; display: flex; flex-direction: column; background: #cbcbcb; font: 11px/14px Arial, "Liberation Sans", sans-serif; }
.banner { position: relative; height: 41px; background: linear-gradient(#6585b2, #45689f); border-bottom: 1px solid #8f9bb0; color: #c9d3e0; }
.swoosh { position: absolute; inset: 0; width: 100%; height: 100%; }
.brow, .msg { position: relative; }
.brow { display: flex; gap: 15px; height: 18px; padding: 1px 10px 0 5px; }
.brow h2 { flex: 1; font-size: 12px; line-height: 15px; }
.goto { display: flex; gap: 5px; margin-left: 4px; }
.goto svg { margin-top: 4px; }
.goto b { font-size: 12px; }
.logo { margin-left: 25px; font: bold 22px/18px "Liberation Serif", serif; color: transparent; background: repeating-linear-gradient(#c9d3e0 0 1px, rgba(201, 211, 224, .3) 1px 2px); background-clip: text; height: 18px; }
.logo i { font-size: 12px; }
.msg { text-align: center; line-height: 18px; font-weight: bold; }

.tools { height: 33px; display: flex; align-items: center; padding: 0 3px 2px; background: linear-gradient(#bdbdbd, #b2b2b2); }
.tools input { width: 112px; height: 18px; margin: 0 5px 0 4px; border: 1px solid #999; background: #cbcbcb; }
.tools label { margin-left: 3px; }
.sel { height: 18px; display: flex; border: 1px solid #8f8f8f; background: #cbcbcb; }
.sel select { flex: 1; appearance: none; border: 0; background: none; padding: 0; outline: 0; }
.s2 select { padding-left: 1px; }
.sel svg { width: 16px; height: 16px; background: #bdbdbd; border: 1px solid #999; }
.s1 { width: 128px; }
.s2 { width: 198px; margin-left: 4px; }
.lg svg, .actions svg { width: 20px; height: 20px; }
.caret { margin-left: 4px; }
.tools .lg + .dots { margin-left: 5px; }
.actions { display: flex; align-items: center; gap: 7px; margin-left: 9px; }
.actions .dots { margin: 0 -3px; }
.faded { opacity: .6; }
.dots { width: 2px; height: 16px; flex: none; background: repeating-linear-gradient(#999 0 2px, transparent 2px 4px); }
.flip { transform: scaleX(-1); }

.apptabs { height: 26px; display: flex; align-items: flex-end; background: linear-gradient(#b2b2b2, #a3a3a3); border-bottom: 1px solid #4a6a8a; }
.apptabs button { width: 46px; height: 25px; margin-left: 1px; border: 1px solid #8a8a8a; border-bottom: 0; border-radius: 3px 3px 0 0; background: linear-gradient(#c6c6c6, #a2a2a2); }
.apptabs .cur { width: 108px; height: 28px; margin-bottom: -1px; background: #cbcbcb; border-color: #45708f; color: #12406f; }

.form { height: 183px; padding: 20px 41px 0 0; display: flex; justify-content: space-between; }
.form li { width: 140px; height: 29px; line-height: 29px; text-align: right; }
.req { color: #8a6a3a; font-size: 12px; }
.flags label { display: flex; height: 29px; align-items: center; justify-content: flex-end; gap: 8px; line-height: 20px; }
.flags { margin-top: -6px; }

input[type=checkbox] { appearance: none; position: relative; display: block; width: 11px; height: 11px; border: 1px solid #7b92ae; background: #fff; }
input.big[type=checkbox] { width: 14px; height: 14px; border: 1px solid; border-color: #888 #ccc #ccc #888; }
input[type=checkbox]:checked::after { content: ""; position: absolute; inset: 0; background: #4a7cc4; clip-path: polygon(10% 55%, 25% 45%, 42% 70%, 88% 5%, 100% 10%, 46% 98%); }
.flags input.big[type=checkbox], .under input[type=checkbox] { background: #c4c4c4; border-color: #808080 #999 #999 #808080; }

.panel { border: 1px solid #9c9c9c; border-radius: 3px 3px 0 0; }
.phead { height: 28px; display: flex; align-items: center; padding: 0 6px 0 12px; background: linear-gradient(#efefef, #c9c9c9); border-bottom: 1px solid #a5a5a5; border-radius: 3px 3px 0 0; color: #0c2f5e; }
.phead h3 { color: #000; }
.pend { margin-left: auto; display: flex; align-items: center; gap: 4px; margin-top: -4px; }
.pend a { text-decoration: underline; }
.pend .dots { height: 14px; margin: 4px 5px 0 8px; }
table { width: 100%; table-layout: fixed; border-collapse: collapse; background: #fff; }
th { height: 27px; padding: 0 2px; text-align: left; font-weight: normal; background: linear-gradient(#fff, #ededed 45%, #dedede 55%, #f2f2f2); border-left: 1px solid #d2d2d2; }
th a { text-decoration: underline; }
td { height: 28px; padding: 0 2px; border-left: 1px solid #dcdcdc; }
th:first-child, td:first-child { border-left: 0; }
.num { text-align: right; padding-right: 6px; }
.open td { background: #b8cde4; }
.cell { display: flex; align-items: center; }
.cell .w90 { margin-right: 5px; }
.w90 { width: 90px; }
.w50 { width: 50px; }
.w52 { width: 52px; text-align: right; }
td input:not([type=checkbox]), .top input, .dbody input:not([type=radio], [type=checkbox]) { height: 21px; padding: 0 1px; border: 1px solid #c6c6c6; background: #fff; }
td .w50 { text-align: right; }
.bin { display: block; margin: 2px 0 0 2px; }
.exp svg { margin-left: 5px; }
h4 { height: 31px; padding: 4px 8px 0; line-height: 27px; font-weight: normal; border-top: 1px solid #8f8f8f; background: #d8e4ef; box-shadow: inset 0 2px #c4c4c4, inset 0 3px #999; }
.pfoot { height: 30px; padding: 0 6px 2px 0; display: flex; align-items: center; justify-content: flex-end; border-top: 2px solid #a5a5a5; background: linear-gradient(#f0f0f0, #c8c8c8); }
.btn { height: 20px; padding: 0 10px; background: #d4d0c8; border: 1px solid; border-color: #fff #404040 #404040 #fff; box-shadow: inset -1px -1px #808080; }
.strong { font-weight: bold; }
.pfoot .btn { width: 73px; }

.under { flex: 1; margin: 0 6px 15px 5px; display: flex; flex-direction: column; border-color: #7d7d7d; }
.under .phead { background: linear-gradient(#bdbdbd, #a0a0a0); border-color: #858585; }
.under table { background: #bbb; }
.under th { background: linear-gradient(#c8c8c8, #b9b9b9 45%, #adadad 55%, #bbb); border-color: #a5a5a5; }
.under td { border-color: #a8b4be; }
.under .open td { background: #91a5b7; }
.under td input:not([type=checkbox]) { background: #bcbcbc; border-color: #aaa; }
.under h4 { background: #acb5c1; border-color: #777; box-shadow: inset 0 2px #9f9f9f, inset 0 3px #7a7a7a; }
.u1 { width: 25px; } .u3 { width: 200px; } .u4 { width: 74px; } .u5 { width: 26px; }
.under .num { padding-right: 4px; }
.under .exp svg { margin-left: 3px; }
.ubody { flex: 1; position: relative; padding-top: 8px; background: #bcc2c6; }
.ubody li { width: 139px; height: 29px; line-height: 29px; text-align: right; }
.umid { position: absolute; top: 98px; left: 54%; display: flex; gap: 6px; color: #777; }
.umid input { opacity: .4; }
.ulens { position: absolute; top: 14px; right: 131px; }
.under .pfoot { background: linear-gradient(#b4b4b4, #9f9f9f); border-color: #858585; }
.under .pfoot .btn { background: #a8a59f; border-color: #ccc #333 #333 #ccc; }

.dialog { position: absolute; top: 81px; left: 149px; right: 149px; padding-bottom: 10px; background: #fff; border: 1px solid #666; box-shadow: 2px 4px 6px rgba(0, 0, 0, .5), -2px 0 3px rgba(255, 255, 255, .3); }
.dialog > h2 { height: 23px; padding-left: 5px; line-height: 22px; background: linear-gradient(#fff, #e6e6e6 50%, #dedede 55%, #fff); border-bottom: 1px solid #bbb; }
.top { display: flex; align-items: center; padding: 39px 0 0 54px; }
.top .w90 { margin: 0 29px 0 7px; }
.top .desc { width: 240px; margin-right: 5px; }
.dialog input.ro { background: #e4e4e4; border-color: #b5b5b5; }
.dialog .panel { margin: 18px 11px 0; }
.phead > .dots { margin: 0 7px 0 6px; }
.phead > h3 + .dots { margin: 0 10px 0 9px; }
.filter { display: flex; align-items: center; gap: 5px; margin-right: 11px; }
.phead > .dim { margin-left: 8px; }
.phead > .dots + .dim { margin-left: 0; }
.phead > .dn { margin-left: 10px; }
.dim { opacity: .22; }
.pager { display: flex; align-items: center; gap: 2px; }
.pager .dim { opacity: .4; }
.c1 { width: 42px; } .c2 { width: 217px; } .c4 { width: 152px; } .c5 { width: 92px; } .c6 { width: 44px; }
.cell .need:not([type=checkbox]) { background: #ffffe3; border-color: #ddd9a5; }
.dbody input.need:not([type=radio], [type=checkbox]) { background: #ffffe3; border-color: #e3aa4a; }
.focus { position: relative; display: flex; }
.focus::after { content: ""; position: absolute; left: 2px; top: 4px; width: 1px; height: 13px; background: #000; }
.dbody { height: 99px; padding: 8px 64px 0 4px; display: flex; justify-content: space-between; background: #eaf1f8; }
.line { display: flex; align-items: center; gap: 4px; padding-left: 2px; }
.line .req { margin-right: -3px; }
.line .wide { width: 240px; margin-left: 5px; }
fieldset { display: flex; flex-direction: column; border: 0; margin: 0; padding: 4px 0 0; }
legend { padding: 3px 0 0; line-height: 14px; }
fieldset label { display: flex; align-items: center; height: 16px; gap: 3px; margin-left: 3px; }
input[type=radio] { appearance: none; width: 11px; height: 11px; border-radius: 50%; border: 1px solid; border-color: #555 #ddd #ddd #555; background: #fff; }
input[type=radio]:checked { background: radial-gradient(#000 0 2px, #fff 3px); }
.right { display: grid; grid-template-columns: auto 52px; column-gap: 5px; align-content: start; align-items: center; grid-auto-rows: 28px; padding-top: 4px; text-align: right; }
.ends { display: flex; justify-content: flex-end; gap: 16px; padding: 15px 15px 0; }

.status { position: absolute; left: 0; bottom: 0; width: 104px; height: 17px; padding-left: 4px; line-height: 17px; font-family: Tahoma, Roboto, sans-serif; background: linear-gradient(#fff, #e2e0dc); color: #333; }

.taskbar { height: 52px; display: flex; align-items: flex-start; padding: 2px 2px 0; border-top: 1px solid #fff; background: #d4d0c8; }
.start { width: 52px; height: 22px; padding-left: 2px; display: flex; align-items: center; gap: 1px; font-family: Tahoma, "Noto Sans", sans-serif; font-weight: bold; }
.start, .tasks button { border: 1px solid; border-color: #fff #404040 #404040 #fff; box-shadow: inset -1px -1px #808080; }
.quick { width: 84px; height: 44px; margin: 0 5px 0 7px; padding: 3px 0 0 8px; display: grid; grid-template-columns: repeat(3, 23px); align-content: start; row-gap: 8px; border: solid #fff; border-width: 0 1px; box-shadow: -1px 0 #808080, 1px 0 #808080; }
.tasks { flex: 1; display: grid; grid-template-columns: repeat(4, 160px); gap: 3px; }
.tasks button { height: 22px; padding: 0 0 0 3px; display: flex; align-items: center; gap: 2px; }
.tasks .active { font-family: Tahoma, "Noto Sans", sans-serif; font-weight: bold; background: repeating-conic-gradient(#fff 0 25%, #dedbd5 0 50%) 0 0 / 2px 2px; border-color: #404040 #fff #fff #404040; box-shadow: inset 1px 1px #808080; }
.tray { width: 109px; height: 47px; display: flex; align-items: center; border: 1px solid; border-color: #808080 #fff #fff #808080; padding-left: 2px; }
.icons { display: grid; grid-template-columns: 16px 16px; gap: 3px; }
.icons svg { width: 16px; height: 15px; }
.clock { flex: 1; display: flex; flex-direction: column; align-items: center; gap: 5px; }
</style>
